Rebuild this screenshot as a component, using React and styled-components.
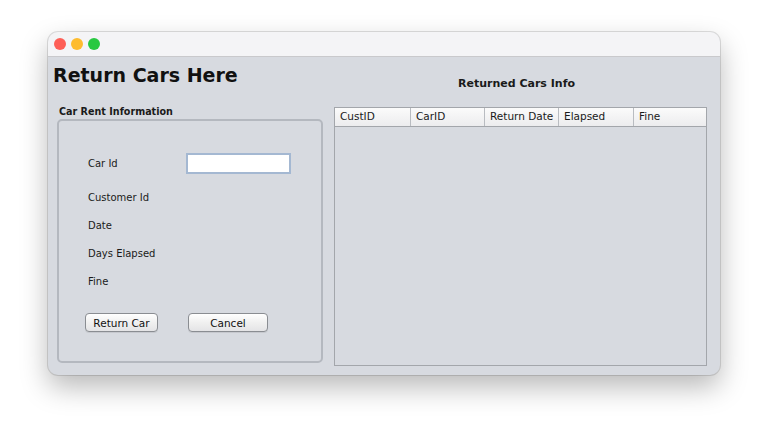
import React from "react";
import styled, { createGlobalStyle } from "styled-components";

const GlobalStyle = createGlobalStyle`
  html, body {
    margin: 0;
    padding: 0;
    background: #ffffff;
  }
  body {
    font-family: "DejaVu Sans", "Liberation Sans", sans-serif;
    color: #1a1a1a;
  }
`;

const Page = styled.div`
  width: 768px;
  height: 438px;
  padding: 32px 0 0 48px;
  box-sizing: border-box;
`;

const Window = styled.div`
  width: 672px;
  height: 343px;
  border-radius: 10px;
  overflow: hidden;
  background: #d7dae0;
  box-shadow: 0 0 0 1px rgba(0, 0, 0, 0.12), 0 12px 28px rgba(0, 0, 0, 0.28);
  display: flex;
  flex-direction: column;
`;

const TitleBar = styled.div`
  height: 24px;
  flex: none;
  background: #f4f4f6;
  border-bottom: 1px solid #c9c9cc;
  display: flex;
  align-items: center;
  gap: 5px;
  padding-left: 6px;
`;

const Light = styled.span`
  width: 12px;
  height: 12px;
  border-radius: 50%;
  background: ${(p) => p.$color};
`;

const Body = styled.div`
  flex: 1;
  display: grid;
  grid-template-columns: 270px 373px;
  column-gap: 11px;
  padding: 0 13px 0 5px;
`;

const LeftColumn = styled.div`
  display: flex;
  flex-direction: column;
`;

const Title = styled.h1`
  margin: 6px 0 0;
  font-size: 19px;
  line-height: 24px;
  font-weight: bold;
  color: #111;
`;

const GroupLabel = styled.div`
  margin: 18px 0 0 6px;
  font-size: 9.6px;
  line-height: 13px;
  font-weight: bold;
`;

const GroupBox = styled.div`
  margin: 1px 0 0 4px;
  height: 244px;
  box-sizing: border-box;
  border: 2px solid #b4b8bf;
  border-radius: 5px;
  padding: 32px 0 0 29px;
  display: flex;
  flex-direction: column;
`;

const Row = styled.div`
  display: flex;
  align-items: center;
  margin-top: ${(p) => p.$top || 0}px;
  height: ${(p) => p.$height || 14}px;
`;

const Label = styled.span`
  width: 98px;
  font-size: 10px;
  line-height: 14px;
`;

const TextField = styled.input`
  width: 105px;
  height: 21px;
  box-sizing: border-box;
  border: 2px solid #a4b8d2;
  background: #fff;
  margin: 0;
  padding: 0 3px;
  font: 10px "DejaVu Sans", sans-serif;
  outline: none;
`;

const ButtonRow = styled.div`
  display: flex;
  gap: 30px;
  margin: 24px 0 0 -3px;
`;

const Button = styled.button`
  width: ${(p) => p.$width}px;
  height: 19px;
  padding: 0;
  border: 1px solid #8a8d92;
  border-radius: 4px;
  background: linear-gradient(#ffffff, #f0f0f0 50%, #e4e4e6);
  font: 10.5px "DejaVu Sans", sans-serif;
  color: #111;
  box-shadow: 0 1px 0 rgba(0, 0, 0, 0.08);
`;

const RightColumn = styled.div`
  display: flex;
  flex-direction: column;
`;

const TableTitle = styled.div`
  margin-top: 20px;
  padding-right: 8px;
  text-align: center;
  font-size: 11px;
  line-height: 14px;
  font-weight: bold;
`;

const Table = styled.div`
  margin-top: 16px;
  height: 259px;
  box-sizing: border-box;
  border: 1px solid #a3a6ab;
  display: flex;
  flex-direction: column;
`;

const HeaderRow = styled.div`
  display: grid;
  grid-template-columns: 76px 74px 74px 75px 1fr;
  height: 18px;
  border-bottom: 1px solid #a3a6ab;
  background: linear-gradient(#fbfbfb, #ececee);
`;

const HeaderCell = styled.div`
  font-size: 10.5px;
  line-height: 17px;
  padding-left: 5px;
  border-right: 1px solid #b9bcc1;
  &:last-child {
    border-right: none;
  }
`;

const columns = ["CustID", "CarID", "Return Date", "Elapsed", "Fine"];

export default function App() {
  return (
    <Page>
      <GlobalStyle />
      <Window>
        <TitleBar>
          <Light $color="#fe5f57" />
          <Light $color="#febc2e" />
          <Light $color="#28c840" />
        </TitleBar>
        <Body>
          <LeftColumn>
            <Title>Return Cars Here</Title>
            <GroupLabel>Car Rent Information</GroupLabel>
            <GroupBox>
              <Row $height={21}>
                <Label>Car Id</Label>
                <TextField />
              </Row>
              <Row $top={17}>
                <Label>Customer Id</Label>
              </Row>
              <Row $top={14}>
                <Label>Date</Label>
              </Row>
              <Row $top={14}>
                <Label>Days Elapsed</Label>
              </Row>
              <Row $top={14}>
                <Label>Fine</Label>
              </Row>
              <ButtonRow>
                <Button $width={73}>Return Car</Button>
                <Button $width={80}>Cancel</Button>
              </ButtonRow>
            </GroupBox>
          </LeftColumn>
          <RightColumn>
            <TableTitle>Returned Cars Info</TableTitle>
            <Table>
              <HeaderRow>
                {columns.map((c) => (
                  <HeaderCell key={c}>{c}</HeaderCell>
                ))}
              </HeaderRow>
            </Table>
          </RightColumn>
        </Body>
      </Window>
    </Page>
  );
}
